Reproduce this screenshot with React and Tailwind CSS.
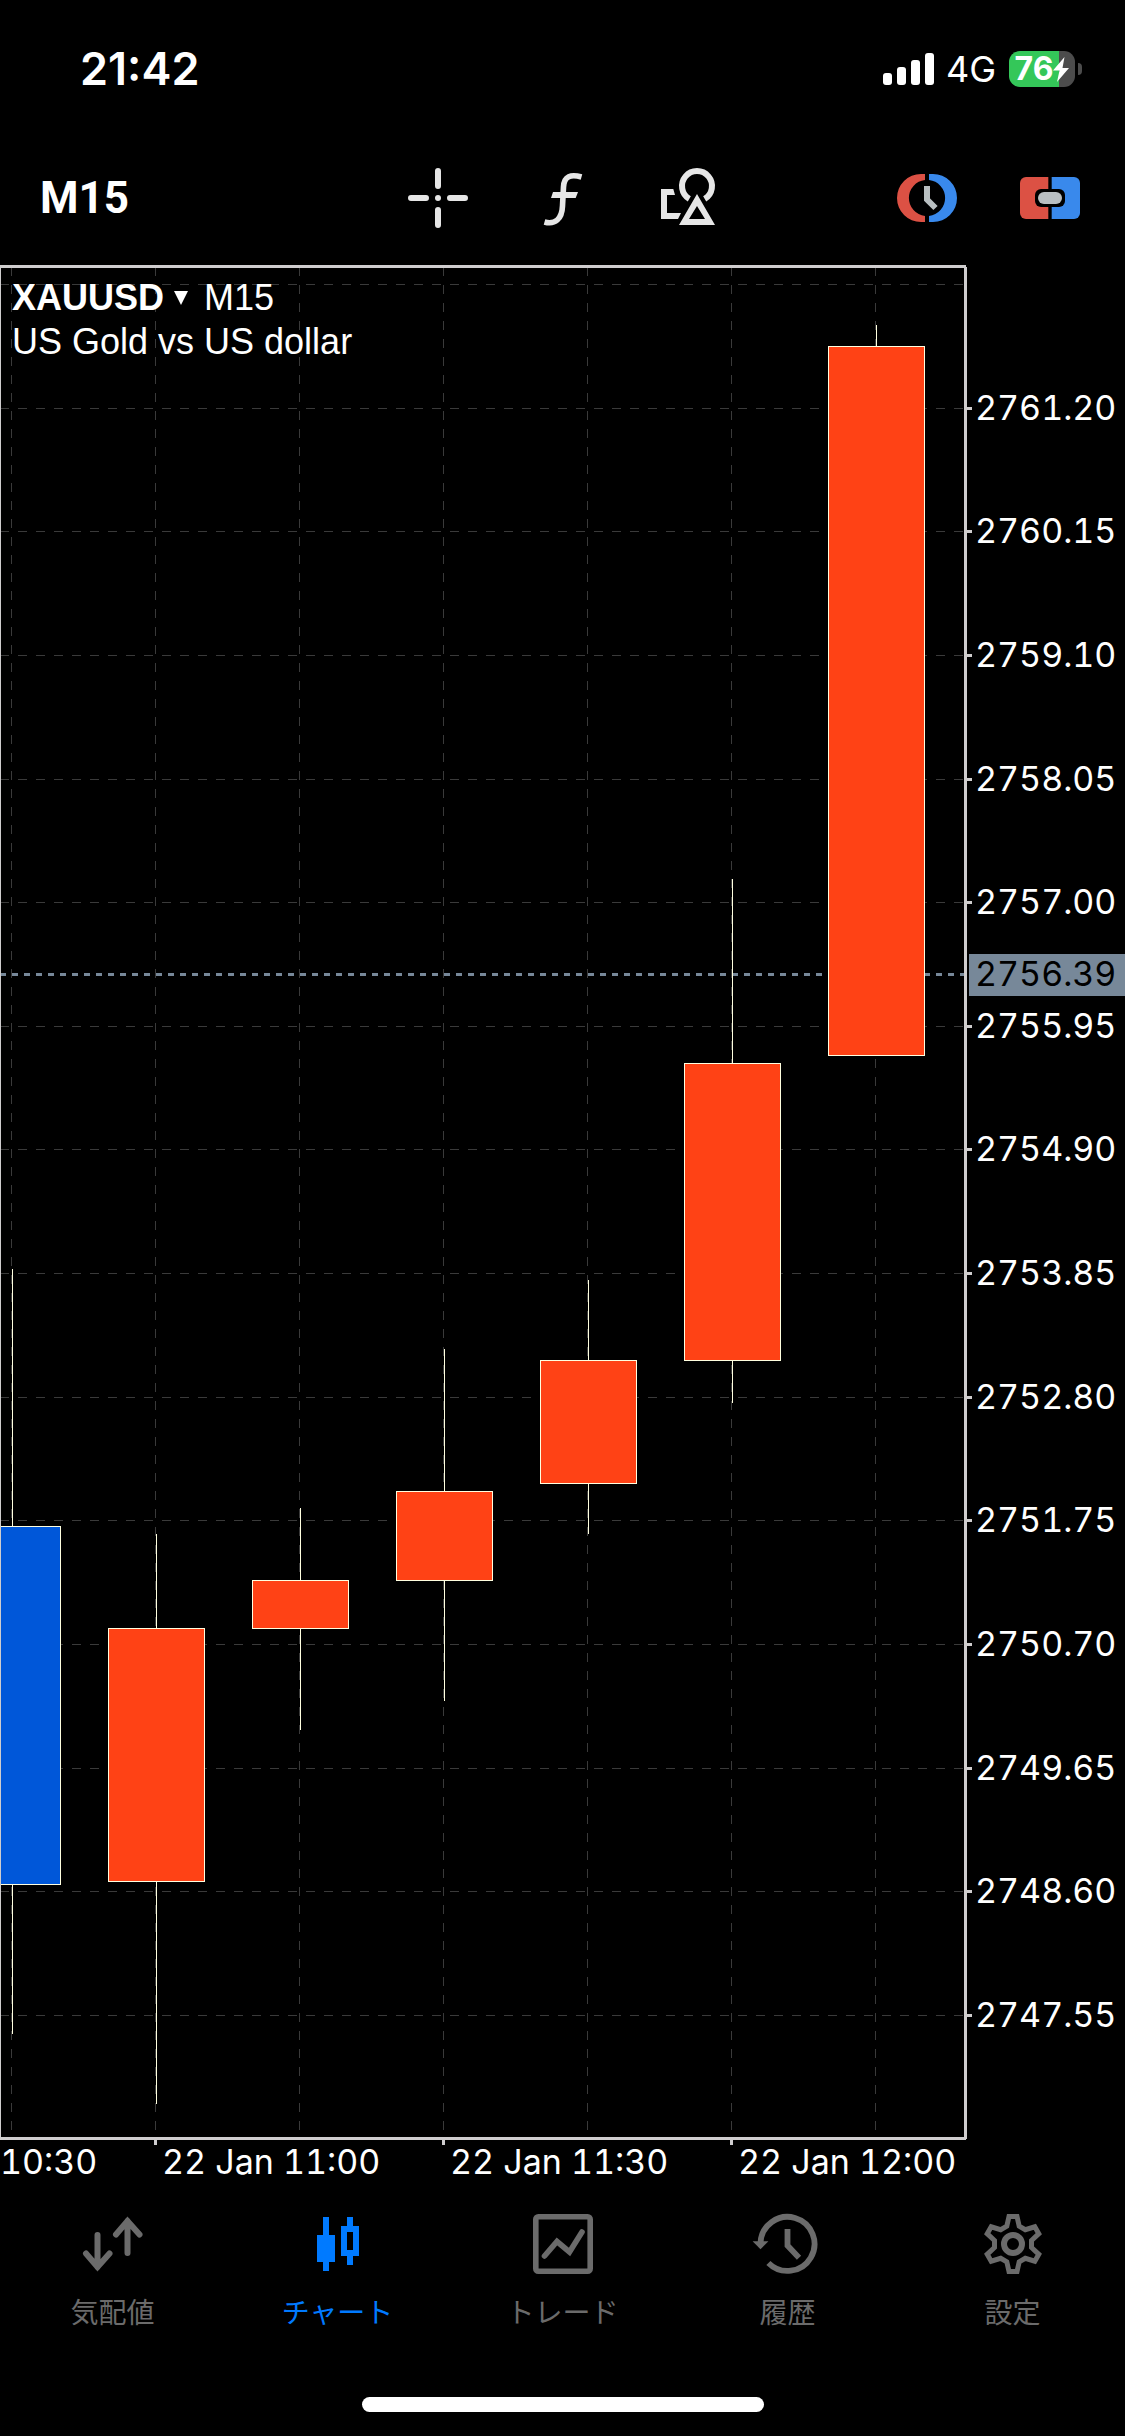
import { useState } from 'react';

const CHART_WIDTH = 1125;
const CHART_HEIGHT = 1920;
const PLOT_RIGHT = 964;
const PLOT_BOTTOM = 1872;

const TOP_PRICE = 2761.2;
const TOP_PRICE_Y = 142.64;
const PRICE_STEP = 1.05;
const ROW_HEIGHT = 123.64;
const BID = 2756.39;

const FIRST_CANDLE_X = 11;
const CANDLE_STEP = 144;
const BODY_WIDTH = 96;

const GRID = '#3a3a3a';
const FRAME = '#cfcdce';
const OUTLINE = '#ffffe0';

// high and low are the wick ends, top and bottom the body ends
const candles = [
  { time: '10:30', high: 2753.89, top: 2751.71, bottom: 2748.67, low: 2747.39, up: true },
  { time: '10:45', high: 2751.64, top: 2750.84, bottom: 2748.69, low: 2746.8, up: false },
  { time: '11:00', high: 2751.86, top: 2751.25, bottom: 2750.84, low: 2749.97, up: false },
  { time: '11:15', high: 2753.21, top: 2752.0, bottom: 2751.25, low: 2750.22, up: false },
  { time: '11:30', high: 2753.8, top: 2753.12, bottom: 2752.07, low: 2751.64, up: false },
  { time: '11:45', high: 2757.2, top: 2755.64, bottom: 2753.12, low: 2752.75, up: false },
  { time: '12:00', high: 2761.91, top: 2761.73, bottom: 2755.71, low: 2755.71, up: false },
];

const timeLabels = [
  { x: 0, text: '10:30' },
  { x: 162, text: '22 Jan 11:00' },
  { x: 450, text: '22 Jan 11:30' },
  { x: 738, text: '22 Jan 12:00' },
];

const yScale = (price) => TOP_PRICE_Y + ((TOP_PRICE - price) / PRICE_STEP) * ROW_HEIGHT;
const rowY = (price) => Math.round(yScale(price));
const candleY = (price) => Math.ceil(yScale(price));

const priceTicks = Array.from({ length: 14 }, (_, index) => TOP_PRICE - index * PRICE_STEP);

function StatusBar() {
  return (
    <div className="flex h-[138px] items-center justify-between pr-[43px] pl-20">
      <time className="text-[45px] leading-[54px] font-semibold">21:42</time>
      <div className="flex items-center">
        <svg width="51" height="32" viewBox="0 0 51 32" fill="#fff" aria-hidden="true">
          <rect x="0" y="20" width="9" height="12" rx="3" />
          <rect x="14" y="14" width="9" height="18" rx="3" />
          <rect x="28" y="7" width="9" height="25" rx="3" />
          <rect x="42" y="0" width="9" height="32" rx="3" />
        </svg>
        <span className="ml-3 text-[36px] leading-[42px]">4G</span>
        <div className="ml-[13px] flex items-center gap-[3px]">
          <div className="flex h-9 w-[66px] items-center justify-center rounded-[11px] bg-linear-to-r from-[#34c759] from-76% to-[#4c4c4c] to-76%">
            <span className="text-[32px] leading-[42px] font-bold">76</span>
            <svg width="16" height="25" viewBox="0 0 16 25" fill="#fff" aria-hidden="true">
              <path d="M11.500 0 0 13.500h6.500L4 25 16 11H9.500z" />
            </svg>
          </div>
          <div className="h-3 w-1 rounded-r-full bg-[#4c4c4c]" />
        </div>
      </div>
    </div>
  );
}

function ToolButton({ label, children }) {
  return (
    <button type="button" aria-label={label} className="cursor-pointer">
      <svg width="60" height="60" viewBox="0 0 60 60" fill="none">
        {children}
      </svg>
    </button>
  );
}

function Toolbar() {
  return (
    <header className="grid h-[127px] grid-cols-[1fr_auto_1fr] items-start pt-[30px]">
      <div className="flex pl-10">
        <button
          type="button"
          className="cursor-pointer font-['Roboto',sans-serif] text-[44px] leading-[60px] font-bold"
        >
          M15
        </button>
      </div>
      <div className="flex gap-[65px]">
        <ToolButton label="Crosshair">
          <g stroke="#e6e6e6" strokeWidth="6" strokeLinecap="round">
            <path d="M30 3v15M30 42v15M3 30h15M42 30h15" />
          </g>
          <circle cx="30" cy="30" r="3" fill="#e6e6e6" />
        </ToolButton>
        <ToolButton label="Indicators">
          <path
            d="M48.500 9C38 6 31 8 30.500 19L29.500 38C29 51 22 57 11.500 54"
            stroke="#e6e6e6"
            strokeWidth="5.6"
          />
          <path d="M20 24h25l-2.300 6H18z" fill="#e6e6e6" />
        </ToolButton>
        <ToolButton label="Objects">
          <path d="M31.300 30.900A15 15 0 1 1 46.700 30.900" stroke="#e6e6e6" strokeWidth="6" />
          <path
            fillRule="evenodd"
            d="M39 26 57 57H21zM39 38l-8 13h16zM3 21h12.300l1.700 6H9v18h14l-3 6H3z"
            fill="#e6e6e6"
          />
        </ToolButton>
      </div>
      <div className="flex justify-end gap-[63px] pr-[45px]">
        <ToolButton label="Market hours">
          <path d="M28 6H24A24 24 0 0 0 24 54H28V47.900A18 18 0 0 1 28 12.100Z" fill="#dc5144" />
          <path d="M32 6H36A24 24 0 0 1 36 54H32V47.900A18 18 0 0 0 32 12.100Z" fill="#3989ec" />
          <path d="M30 18v13.500l8.500 8.500" stroke="#b9bfc1" strokeWidth="6" />
        </ToolButton>
        <ToolButton label="One click trading">
          <path d="M6 9h22.300v42H6a6 6 0 0 1-6-6V15a6 6 0 0 1 6-6z" fill="#dc5144" />
          <path d="M54 9H31.700v42H54a6 6 0 0 0 6-6V15a6 6 0 0 0-6-6z" fill="#3989ec" />
          <rect x="15" y="21" width="30" height="18" rx="6" fill="#000" />
          <rect x="18" y="24" width="24" height="12" rx="6" fill="#b9bfc1" />
        </ToolButton>
      </div>
    </header>
  );
}

function Candle({ candle, index }) {
  const x = FIRST_CANDLE_X + index * CANDLE_STEP + 1.5;
  const top = candleY(candle.top);
  const bottom = candleY(candle.bottom);
  return (
    <g stroke={OUTLINE} strokeWidth="1">
      <line x1={x} x2={x} y1={candleY(candle.high)} y2={candleY(candle.low)} />
      <rect
        x={x - BODY_WIDTH / 2}
        y={top + 0.5}
        width={BODY_WIDTH}
        height={bottom - top}
        fill={candle.up ? '#0057d9' : '#ff4215'}
      />
    </g>
  );
}

function CandleChart() {
  const bidY = rowY(BID);
  return (
    <svg
      viewBox={`0 0 ${CHART_WIDTH} ${CHART_HEIGHT}`}
      className="block h-auto w-full"
      role="img"
      aria-label="XAUUSD M15"
    >
      <g stroke={GRID} strokeWidth="1" strokeDasharray="9 9">
        {[TOP_PRICE + PRICE_STEP, ...priceTicks].map((price) => {
          const y = rowY(price) + 0.5;
          return <line key={price} x1="0" x2={PLOT_RIGHT} y1={y} y2={y} />;
        })}
        {candles.map((candle, index) => {
          const x = FIRST_CANDLE_X + index * CANDLE_STEP + 0.5;
          return <line key={candle.time} x1={x} x2={x} y1="2" y2={PLOT_BOTTOM} />;
        })}
      </g>

      <line
        x1="0"
        x2={PLOT_RIGHT}
        y1={bidY + 0.5}
        y2={bidY + 0.5}
        stroke="#778899"
        strokeWidth="3"
        strokeDasharray="6 6"
      />

      {candles.map((candle, index) => (
        <Candle key={candle.time} candle={candle} index={index} />
      ))}

      {/* frame and axis ticks */}
      <g fill={FRAME}>
        <rect x="0" y="0" width="966" height="3" />
        <rect x="0" y="0" width="1" height="1875" />
        <rect x={PLOT_RIGHT} y="2" width="3" height="1872" />
        <rect x="0" y={PLOT_BOTTOM} width="966" height="3" />
        {priceTicks.map((price) => (
          <rect key={price} x="967" y={rowY(price) - 1} width="5" height="3" />
        ))}
        {[154, 442, 730].map((x) => (
          <rect key={x} x={x} y="1875" width="3" height="5" />
        ))}
      </g>

      <rect x="969" y={bidY - 20} width="156" height="42" fill="#778899" />
      <g fontSize="34" className="tabular-nums">
        {priceTicks.map((price) => (
          <text key={price} x="975" y={rowY(price) + 12} fill="#fff">
            {price.toFixed(2)}
          </text>
        ))}
        <text x="975" y={bidY + 12} fill="#000">
          {BID.toFixed(2)}
        </text>
        {timeLabels.map((label) => (
          <text key={label.text} x={label.x} y="1909" fill="#fff">
            {label.text}
          </text>
        ))}
      </g>
    </svg>
  );
}

const tabs = [
  {
    label: '気配値',
    icon: (
      <g stroke="currentColor" strokeWidth="6" strokeLinecap="round">
        <path d="M14.500 21v32M3 39.500l11.500 13.500L26.500 39.500" />
        <path d="M44.500 39V7M33 20.500L44.500 7l12 13.500" />
      </g>
    ),
  },
  {
    label: 'チャート',
    icon: (
      <path
        fillRule="evenodd"
        d="M15 3h6v18h6v27h-6v9h-6v-9H9V21h6zM39 3h6v9h6v30h-6v9h-6v-9h-6V12h6zM39 18v18h6V18z"
        fill="currentColor"
      />
    ),
  },
  {
    label: 'トレード',
    icon: (
      <g stroke="currentColor" strokeWidth="5.6">
        <rect x="2.800" y="2.800" width="54.400" height="54.400" rx="2.500" />
        <path d="M11.500 42 24 27.500 36.500 38 49 18" strokeLinecap="round" />
      </g>
    ),
  },
  {
    label: '履歴',
    icon: (
      <>
        <path
          d="M2.500 29A27 27 0 1 1 10.400 49M29.500 15v16.500L41 43.700"
          stroke="currentColor"
          strokeWidth="5.8"
        />
        <path d="M-5.400 27.300h15.800l-7.900 8z" fill="currentColor" />
      </>
    ),
  },
  {
    label: '設定',
    icon: (
      <g stroke="currentColor" transform="translate(30 30)">
        <path
          strokeWidth="5"
          d="M-4-27.500H4L6.200-17.800 12.300-14.300 21.800-17.200 25.800-10.300 18.500-3.500V3.500L25.800 10.300 21.800 17.200 12.300 14.300 6.200 17.800 4 27.500H-4L-6.200 17.800-12.300 14.300-21.800 17.200-25.800 10.300-18.500 3.500V-3.500L-25.800-10.300-21.800-17.200-12.300-14.300-6.200-17.800Z"
        />
        <circle r="9" strokeWidth="6" />
      </g>
    ),
  },
];

function TabBar() {
  const [active, setActive] = useState('チャート');
  return (
    <nav className="grid grid-cols-5 pt-[29px]">
      {tabs.map((tab) => (
        <button
          key={tab.label}
          type="button"
          onClick={() => setActive(tab.label)}
          className={`flex cursor-pointer flex-col items-center gap-6 ${
            active === tab.label ? 'text-[#007aff]' : 'text-[#6b6b6b]'
          }`}
        >
          <svg
            width="60"
            height="60"
            viewBox="0 0 60 60"
            fill="none"
            className="overflow-visible"
            aria-hidden="true"
          >
            {tab.icon}
          </svg>
          <span className="text-[28px] leading-[30px]">{tab.label}</span>
        </button>
      ))}
    </nav>
  );
}

export default function App() {
  return (
    <div className="min-h-screen bg-black font-['Inter','Noto_Sans_CJK_JP',sans-serif] text-white">
      <StatusBar />
      <Toolbar />
      <main className="relative">
        <CandleChart />
        <div className="absolute top-[11px] left-3 font-['Liberation_Sans',sans-serif] text-[36px] leading-[44px]">
          <button type="button" className="flex cursor-pointer items-center">
            <span className="font-bold">XAUUSD</span>
            <svg width="14" height="14" viewBox="0 0 14 14" className="mr-4 ml-[10px]" aria-hidden="true">
              <path d="M0 0h14L7 14z" fill="#fff" />
            </svg>
            <span>M15</span>
          </button>
          <p>US Gold vs US dollar</p>
        </div>
      </main>
      <TabBar />
      <div className="mx-auto mt-[69px] h-[15px] w-[402px] rounded-full bg-white" />
    </div>
  );
}
